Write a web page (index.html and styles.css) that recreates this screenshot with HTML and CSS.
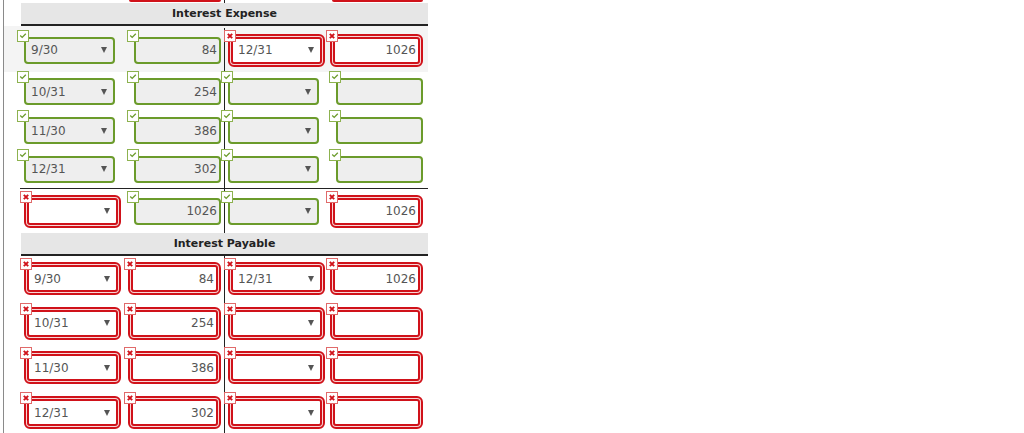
FILE: index.html
```html
<!DOCTYPE html>
<html>
<head>
<meta charset="utf-8">
<link rel="stylesheet" href="styles.css">
</head>
<body>
<div class="sheet">
  <div class="row strip">
    <div class="cell c1"></div>
    <div class="cell c2"><div class="stub s2"></div></div>
    <div class="cell c3"></div>
    <div class="cell c4"><div class="stub s4"></div></div>
  </div>

  <div class="hdr">Interest Expense</div>

  <div class="row r1 hl">
    <div class="cell c1"><div class="fld sel"><span class="badge ok"><svg viewBox="0 0 10 10"><path d="M2.2 4.6 L4.2 6.4 L7.8 2.8"/></svg></span><span class="val">9/30</span><span class="arr"></span></div></div>
    <div class="cell c2"><div class="fld num"><span class="badge ok"><svg viewBox="0 0 10 10"><path d="M2.2 4.6 L4.2 6.4 L7.8 2.8"/></svg></span><span class="val">84</span></div></div>
    <div class="cell c3"><div class="ring"><div class="fld sel"><span class="badge bad"><svg viewBox="0 0 10 10"><path d="M2.8 2.8 L7.2 7.2 M7.2 2.8 L2.8 7.2"/></svg></span><span class="val">12/31</span><span class="arr"></span></div></div></div>
    <div class="cell c4"><div class="ring"><div class="fld num"><span class="badge bad"><svg viewBox="0 0 10 10"><path d="M2.8 2.8 L7.2 7.2 M7.2 2.8 L2.8 7.2"/></svg></span><span class="val">1026</span></div></div></div>
  </div>

  <div class="row rg">
    <div class="cell c1"><div class="fld sel"><span class="badge ok"><svg viewBox="0 0 10 10"><path d="M2.2 4.6 L4.2 6.4 L7.8 2.8"/></svg></span><span class="val">10/31</span><span class="arr"></span></div></div>
    <div class="cell c2"><div class="fld num"><span class="badge ok"><svg viewBox="0 0 10 10"><path d="M2.2 4.6 L4.2 6.4 L7.8 2.8"/></svg></span><span class="val">254</span></div></div>
    <div class="cell c3"><div class="fld sel"><span class="badge ok"><svg viewBox="0 0 10 10"><path d="M2.2 4.6 L4.2 6.4 L7.8 2.8"/></svg></span><span class="val"></span><span class="arr"></span></div></div>
    <div class="cell c4"><div class="fld num"><span class="badge ok"><svg viewBox="0 0 10 10"><path d="M2.2 4.6 L4.2 6.4 L7.8 2.8"/></svg></span><span class="val"></span></div></div>
  </div>

  <div class="row rg">
    <div class="cell c1"><div class="fld sel"><span class="badge ok"><svg viewBox="0 0 10 10"><path d="M2.2 4.6 L4.2 6.4 L7.8 2.8"/></svg></span><span class="val">11/30</span><span class="arr"></span></div></div>
    <div class="cell c2"><div class="fld num"><span class="badge ok"><svg viewBox="0 0 10 10"><path d="M2.2 4.6 L4.2 6.4 L7.8 2.8"/></svg></span><span class="val">386</span></div></div>
    <div class="cell c3"><div class="fld sel"><span class="badge ok"><svg viewBox="0 0 10 10"><path d="M2.2 4.6 L4.2 6.4 L7.8 2.8"/></svg></span><span class="val"></span><span class="arr"></span></div></div>
    <div class="cell c4"><div class="fld num"><span class="badge ok"><svg viewBox="0 0 10 10"><path d="M2.2 4.6 L4.2 6.4 L7.8 2.8"/></svg></span><span class="val"></span></div></div>
  </div>

  <div class="row rg r4">
    <div class="cell c1"><div class="fld sel"><span class="badge ok"><svg viewBox="0 0 10 10"><path d="M2.2 4.6 L4.2 6.4 L7.8 2.8"/></svg></span><span class="val">12/31</span><span class="arr"></span></div></div>
    <div class="cell c2"><div class="fld num"><span class="badge ok"><svg viewBox="0 0 10 10"><path d="M2.2 4.6 L4.2 6.4 L7.8 2.8"/></svg></span><span class="val">302</span></div></div>
    <div class="cell c3"><div class="fld sel"><span class="badge ok"><svg viewBox="0 0 10 10"><path d="M2.2 4.6 L4.2 6.4 L7.8 2.8"/></svg></span><span class="val"></span><span class="arr"></span></div></div>
    <div class="cell c4"><div class="fld num"><span class="badge ok"><svg viewBox="0 0 10 10"><path d="M2.2 4.6 L4.2 6.4 L7.8 2.8"/></svg></span><span class="val"></span></div></div>
  </div>

  <div class="sep"></div>

  <div class="row r5">
    <div class="cell c1"><div class="ring"><div class="fld sel"><span class="badge bad"><svg viewBox="0 0 10 10"><path d="M2.8 2.8 L7.2 7.2 M7.2 2.8 L2.8 7.2"/></svg></span><span class="val"></span><span class="arr"></span></div></div></div>
    <div class="cell c2"><div class="fld num"><span class="badge ok"><svg viewBox="0 0 10 10"><path d="M2.2 4.6 L4.2 6.4 L7.8 2.8"/></svg></span><span class="val">1026</span></div></div>
    <div class="cell c3"><div class="fld sel"><span class="badge ok"><svg viewBox="0 0 10 10"><path d="M2.2 4.6 L4.2 6.4 L7.8 2.8"/></svg></span><span class="val"></span><span class="arr"></span></div></div>
    <div class="cell c4"><div class="ring"><div class="fld num"><span class="badge bad"><svg viewBox="0 0 10 10"><path d="M2.8 2.8 L7.2 7.2 M7.2 2.8 L2.8 7.2"/></svg></span><span class="val">1026</span></div></div></div>
  </div>

  <div class="hdr">Interest Payable</div>

  <div class="row rr">
    <div class="cell c1"><div class="ring"><div class="fld sel"><span class="badge bad"><svg viewBox="0 0 10 10"><path d="M2.8 2.8 L7.2 7.2 M7.2 2.8 L2.8 7.2"/></svg></span><span class="val">9/30</span><span class="arr"></span></div></div></div>
    <div class="cell c2"><div class="ring"><div class="fld num"><span class="badge bad"><svg viewBox="0 0 10 10"><path d="M2.8 2.8 L7.2 7.2 M7.2 2.8 L2.8 7.2"/></svg></span><span class="val">84</span></div></div></div>
    <div class="cell c3"><div class="ring"><div class="fld sel"><span class="badge bad"><svg viewBox="0 0 10 10"><path d="M2.8 2.8 L7.2 7.2 M7.2 2.8 L2.8 7.2"/></svg></span><span class="val">12/31</span><span class="arr"></span></div></div></div>
    <div class="cell c4"><div class="ring"><div class="fld num"><span class="badge bad"><svg viewBox="0 0 10 10"><path d="M2.8 2.8 L7.2 7.2 M7.2 2.8 L2.8 7.2"/></svg></span><span class="val">1026</span></div></div></div>
  </div>

  <div class="row rr r2b">
    <div class="cell c1"><div class="ring"><div class="fld sel"><span class="badge bad"><svg viewBox="0 0 10 10"><path d="M2.8 2.8 L7.2 7.2 M7.2 2.8 L2.8 7.2"/></svg></span><span class="val">10/31</span><span class="arr"></span></div></div></div>
    <div class="cell c2"><div class="ring"><div class="fld num"><span class="badge bad"><svg viewBox="0 0 10 10"><path d="M2.8 2.8 L7.2 7.2 M7.2 2.8 L2.8 7.2"/></svg></span><span class="val">254</span></div></div></div>
    <div class="cell c3"><div class="ring"><div class="fld sel"><span class="badge bad"><svg viewBox="0 0 10 10"><path d="M2.8 2.8 L7.2 7.2 M7.2 2.8 L2.8 7.2"/></svg></span><span class="val"></span><span class="arr"></span></div></div></div>
    <div class="cell c4"><div class="ring"><div class="fld num"><span class="badge bad"><svg viewBox="0 0 10 10"><path d="M2.8 2.8 L7.2 7.2 M7.2 2.8 L2.8 7.2"/></svg></span><span class="val"></span></div></div></div>
  </div>

  <div class="row rr">
    <div class="cell c1"><div class="ring"><div class="fld sel"><span class="badge bad"><svg viewBox="0 0 10 10"><path d="M2.8 2.8 L7.2 7.2 M7.2 2.8 L2.8 7.2"/></svg></span><span class="val">11/30</span><span class="arr"></span></div></div></div>
    <div class="cell c2"><div class="ring"><div class="fld num"><span class="badge bad"><svg viewBox="0 0 10 10"><path d="M2.8 2.8 L7.2 7.2 M7.2 2.8 L2.8 7.2"/></svg></span><span class="val">386</span></div></div></div>
    <div class="cell c3"><div class="ring"><div class="fld sel"><span class="badge bad"><svg viewBox="0 0 10 10"><path d="M2.8 2.8 L7.2 7.2 M7.2 2.8 L2.8 7.2"/></svg></span><span class="val"></span><span class="arr"></span></div></div></div>
    <div class="cell c4"><div class="ring"><div class="fld num"><span class="badge bad"><svg viewBox="0 0 10 10"><path d="M2.8 2.8 L7.2 7.2 M7.2 2.8 L2.8 7.2"/></svg></span><span class="val"></span></div></div></div>
  </div>

  <div class="row rr">
    <div class="cell c1"><div class="ring"><div class="fld sel"><span class="badge bad"><svg viewBox="0 0 10 10"><path d="M2.8 2.8 L7.2 7.2 M7.2 2.8 L2.8 7.2"/></svg></span><span class="val">12/31</span><span class="arr"></span></div></div></div>
    <div class="cell c2"><div class="ring"><div class="fld num"><span class="badge bad"><svg viewBox="0 0 10 10"><path d="M2.8 2.8 L7.2 7.2 M7.2 2.8 L2.8 7.2"/></svg></span><span class="val">302</span></div></div></div>
    <div class="cell c3"><div class="ring"><div class="fld sel"><span class="badge bad"><svg viewBox="0 0 10 10"><path d="M2.8 2.8 L7.2 7.2 M7.2 2.8 L2.8 7.2"/></svg></span><span class="val"></span><span class="arr"></span></div></div></div>
    <div class="cell c4"><div class="ring"><div class="fld num"><span class="badge bad"><svg viewBox="0 0 10 10"><path d="M2.8 2.8 L7.2 7.2 M7.2 2.8 L2.8 7.2"/></svg></span><span class="val"></span></div></div></div>
  </div>
</div>
</body>
</html>
```

FILE: styles.css
```css
* { box-sizing: border-box; }

html, body {
  margin: 0;
  background: #ffffff;
  overflow: hidden;
}

body {
  font-family: "DejaVu Sans", Verdana, sans-serif;
  height: 433px;
}

.sheet {
  margin-left: 3px;
  border-left: 1px solid #8a8a8a;
  width: 425px;
  height: 433px;
}

.row {
  display: grid;
  grid-template-columns: repeat(4, 102px);
  padding-left: 16px;
}

.strip { height: 3px; }
.strip .cell { align-items: flex-start; }

.stub {
  height: 2px;
  background: #d0121a;
  border-radius: 0 0 4px 4px;
}
.s2 { width: 92px; }
.s4 { width: 91px; }

.r1 { height: 46px; padding-top: 2px; }
.hl { background: #f4f4f4; }
.rg { height: 39px; }
.r4 { height: 38px; }
.r5 { height: 44px; }
.rr { height: 45px; }
.r2b { height: 44px; }

.cell {
  display: flex;
  align-items: center;
}
.c1 { padding-left: 4px; }
.c2 { justify-content: flex-end; padding-right: 3px; }
.c3 { border-left: 1px solid #222222; padding-left: 3px; }
.c4 { justify-content: flex-end; padding-right: 5px; }

.hdr {
  margin-left: 17px;
  height: 23px;
  background: #e6e6e6;
  border-bottom: 2px solid #222222;
  color: #222222;
  font-size: 11px;
  font-weight: bold;
  line-height: 21px;
  text-align: center;
}

.sep {
  margin-left: 16px;
  height: 1px;
  background: #222222;
}

.fld {
  position: relative;
  height: 27px;
  border: 2px solid #6b9b2b;
  border-radius: 4px;
  background: #eeeeee;
  display: flex;
  align-items: center;
  font-size: 12px;
  color: #555555;
}

.sel {
  width: 91px;
  padding: 0 6px 0 5px;
  justify-content: space-between;
}

.num {
  width: 87px;
  padding-right: 2px;
  justify-content: flex-end;
}

.arr {
  width: 0;
  height: 0;
  border-left: 3.5px solid transparent;
  border-right: 3.5px solid transparent;
  border-top: 6px solid #555555;
}

.ring {
  border: 2px solid #d0121a;
  border-radius: 6px;
  padding: 1px;
  background: #f8d6d6;
}
.ring .fld {
  border-color: #d0121a;
  border-radius: 3px;
  background: #ffffff;
}

.badge {
  position: absolute;
  left: -9px;
  top: -9px;
  width: 12px;
  height: 12px;
  border: 1px solid #8db24f;
  background: #ffffff;
  display: flex;
}
.badge svg {
  width: 10px;
  height: 10px;
  fill: none;
}
.badge.ok svg path {
  stroke: #6b9b2b;
  stroke-width: 1.3;
}
.badge.bad {
  border-color: #e06a6a;
}
.badge.bad svg path {
  stroke: #d0121a;
  stroke-width: 1.9;
}
```
